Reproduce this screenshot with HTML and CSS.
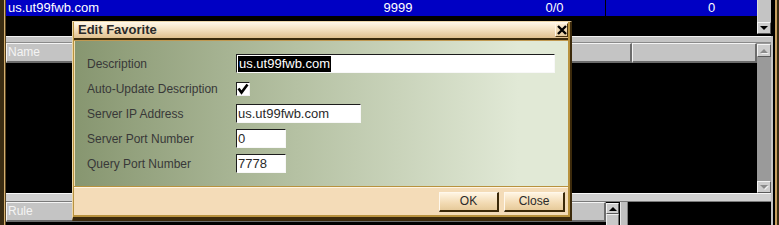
FILE: index.html
```html
<!DOCTYPE html>
<html>
<head>
<meta charset="utf-8">
<title>Edit Favorite</title>
<link rel="stylesheet" href="styles.css">
</head>
<body>
<div class="screen">
  <div class="edge-left"></div>
  <div class="main">
    <section class="pane pane-servers">
      <div class="list">
        <div class="row row-selected">
          <span class="cell c-name">us.ut99fwb.com</span>
          <span class="cell c-ping">9999</span>
          <span class="cell c-players">0/0</span>
          <span class="cell c-extra">0</span>
        </div>
      </div>
      <div class="vscroll vscroll-top">
        <div class="track"></div>
        <div class="sbtn"><span class="tri tri-down"></span></div>
      </div>
    </section>
    <div class="lower">
      <div class="splitter"></div>
      <section class="pane pane-players">
        <div class="list">
          <div class="header">
            <span class="hcell h-name">Name</span>
            <span class="hcell h-rest"></span>
          </div>
          <div class="list-body"></div>
        </div>
        <div class="vscroll vscroll-players">
          <div class="sbtn sbtn-up"><span class="tri tri-up off"></span></div>
          <div class="track dark"></div>
          <div class="sbtn"><span class="tri tri-down off"></span></div>
        </div>
      </section>
      <div class="hbar"></div>
      <section class="pane pane-rules">
        <span class="hcell h-rule">Rule</span>
        <div class="mini-scroll">
          <div class="sbtn sbtn-mini"><span class="tri tri-up"></span></div>
          <div class="mini-track"></div>
        </div>
        <div class="mini-strip"></div>
      </section>
    </div>
  </div>
  <div class="edge-right"></div>
</div>

<div class="dialog">
  <div class="titlebar">
    <span class="title">Edit Favorite</span>
    <span class="close-btn">
      <svg width="10" height="10" viewBox="0 0 10 10"><path d="M1 1 L9 9 M9 1 L1 9" stroke="#000" stroke-width="2.4" fill="none"/></svg>
    </span>
  </div>
  <div class="title-sep"></div>
  <div class="dlg-body">
    <div class="field"><span class="label">Description</span><div class="input wide"><span class="sel">us.ut99fwb.com</span></div></div>
    <div class="field"><span class="label">Auto-Update Description</span><div class="checkbox"><svg width="12" height="12" viewBox="0 0 12 12"><path d="M1.5 5.5 L4.5 9.5 L10.5 1.5" stroke="#000" stroke-width="2.6" fill="none"/></svg></div></div>
    <div class="field"><span class="label">Server IP Address</span><div class="input medium">us.ut99fwb.com</div></div>
    <div class="field"><span class="label">Server Port Number</span><div class="input short">0</div></div>
    <div class="field"><span class="label">Query Port Number</span><div class="input short">7778</div></div>
  </div>
  <div class="btnbar">
    <span class="btn btn-ok">OK</span>
    <span class="btn btn-close">Close</span>
  </div>
</div>
</body>
</html>
```

FILE: styles.css
```css
* { box-sizing: border-box; }
html, body { margin: 0; padding: 0; }
body {
  width: 779px;
  height: 225px;
  overflow: hidden;
  background: #000;
  font-family: "Liberation Sans", Arial, sans-serif;
  position: relative;
}
.screen { display: flex; width: 779px; height: 225px; }
.edge-left {
  width: 6px;
  background: linear-gradient(to right, #3a2c12 0 4px, #d4b070 4px 5px, #5a4420 5px 6px);
}
.edge-right {
  width: 6px;
  background: linear-gradient(to right, #000 0 2px, #c8a060 2px 4px, #3a2c12 4px 6px);
}
.main { width: 767px; display: flex; flex-direction: column; }

.pane { display: flex; }
.pane-servers { height: 36px; }
.list { width: 751px; display: flex; flex-direction: column; }
.row-selected {
  display: flex;
  height: 16px;
  background: #0000c4;
  color: #fff;
  font-size: 13px;
  line-height: 16px;
}
.cell { white-space: nowrap; }
.c-name { width: 286px; padding-left: 2px; }
.c-ping { width: 212px; text-align: center; }
.c-players { width: 102px; text-align: center; border-right: 1px solid #000; }
.c-extra { flex: 1; padding-left: 60px; text-align: center; }

.vscroll { width: 16px; display: flex; flex-direction: column; }
.vscroll-top { border-right: 2px solid #000; }
.vscroll-top .track { flex: 1; background: #c4c4c4; border-left: 1px solid #dcdcdc; }
.vscroll-top .sbtn { margin-bottom: 2px; }
.sbtn {
  width: 14px;
  height: 12px;
  background: #cdcdcd;
  border: 1px solid;
  border-color: #f4f4f4 #5a5a5a #5a5a5a #f4f4f4;
  display: flex;
  align-items: center;
  justify-content: center;
}
.tri { width: 0; height: 0; }
.tri-down { border-left: 4px solid transparent; border-right: 4px solid transparent; border-top: 4px solid #000; }
.tri-up { border-left: 4px solid transparent; border-right: 4px solid transparent; border-bottom: 4px solid #000; }
.tri-down.off { border-top-color: #8a8a8a; filter: drop-shadow(1px 1px 0 #f0f0f0); }
.tri-up.off { border-bottom-color: #8a8a8a; filter: drop-shadow(1px 1px 0 #f0f0f0); }

.lower {
  flex: 1;
  display: flex;
  flex-direction: column;
  border-right: 2px solid #c4c4c4;
}
.splitter {
  height: 7px;
  background: #c4c4c4;
  border-top: 1px solid #f2f2f2;
  border-bottom: 1px solid #8a8a8a;
}
.pane-players { height: 150px; }
.pane-players .list { width: 751px; }
.header { display: flex; height: 20px; }
.hcell {
  height: 20px;
  background: #c4c4c4;
  border-style: solid;
  border-width: 1px 2px 2px 1px;
  border-color: #f4f4f4 #6c6c6c #6c6c6c #f4f4f4;
  color: #f4f4f4;
  font-size: 12px;
  line-height: 17px;
  padding-left: 1px;
}
.h-name { width: 626px; }
.h-rest { flex: 1; }
.list-body { flex: 1; background: #000; }

.vscroll-players { width: 14px; background: #9a9a9a; padding-top: 1px; }
.vscroll-players .sbtn-up { height: 13px; }
.vscroll-players .track { flex: 1; }

.hbar {
  height: 9px;
  background: #d0d0d0;
  border-top: 1px solid #f8f8f8;
  border-bottom: 1px solid #7a7a7a;
}
.pane-rules { flex: 1; align-items: flex-start; }
.h-rule { width: 600px; }
.mini-scroll { width: 13px; display: flex; flex-direction: column; align-self: stretch; padding-top: 1px; }
.sbtn-mini { width: 13px; height: 11px; }
.mini-track {
  flex: 1;
  background: #c8c8c8;
  border-top: 1px solid #f0f0f0;
  border-left: 1px solid #f0f0f0;
  border-right: 1px solid #707070;
}
.mini-strip {
  width: 8px;
  margin-left: 1px;
  align-self: stretch;
  background: #c0c0c0;
  border-left: 1px solid #e8e8e8;
  border-right: 1px solid #808080;
}

/* Dialog window */
.dialog {
  position: absolute;
  left: 72px;
  top: 21px;
  width: 500px;
  height: 200px;
  display: flex;
  flex-direction: column;
  background: #b8923e;
  border-style: solid;
  border-width: 1px 2px 4px 1px;
  border-color: #ecd6a8 #3c2a0c #3c2a0c #ecd6a8;
  padding: 0 2px 2px 1px;
}
.titlebar {
  height: 16px;
  display: flex;
  align-items: center;
  justify-content: space-between;
  padding-left: 4px;
  background: linear-gradient(#fff8ea, #f6e4c6 40%, #e0c08e);
}
.title { font-size: 13px; font-weight: bold; color: #2a2a2a; line-height: 16px; }
.close-btn {
  width: 13px;
  height: 14px;
  display: flex;
  align-items: center;
  justify-content: center;
  background: linear-gradient(#fbecd2, #e6cc9e);
  border-style: solid;
  border-width: 1px 1px 1px 1px;
  border-color: #fff6e6 #4a3410 #4a3410 #fff6e6;
}
.title-sep {
  height: 3px;
  background: linear-gradient(#3a2a0c 0 2px, #c09850 2px 3px);
}
.dlg-body {
  height: 145px;
  margin-bottom: 1px;
  border-left: 1px solid #efdcae;
  padding: 10px 0 0 12px;
  background: linear-gradient(to right, #879670 0%, #b5c1a3 45%, #e1e9d6 90%, #e1e9d6 100%);
}
.field { display: flex; align-items: center; height: 25px; }
.label { width: 149px; font-size: 12px; color: #383838; white-space: nowrap; }
.input {
  height: 19px;
  background: #fff;
  border: 1px solid;
  border-color: #1c1c1c #f8f8f8 #f8f8f8 #1c1c1c;
  font-size: 13px;
  line-height: 17px;
  padding-left: 1px;
  color: #2a2a2a;
  white-space: nowrap;
}
.wide { width: 319px; }
.medium { width: 125px; }
.short { width: 50px; }
.sel {
  display: inline-block;
  background: #000;
  color: #fff;
  line-height: 16px;
  padding: 0 1px;
}
.checkbox {
  width: 14px;
  height: 14px;
  background: #fff;
  border: 1px solid;
  border-color: #1c1c1c #f0f0f0 #f0f0f0 #1c1c1c;
  display: flex;
  align-items: center;
  justify-content: center;
}
.btnbar {
  height: 28px;
  display: flex;
  justify-content: flex-end;
  align-items: flex-start;
  gap: 5px;
  padding: 4px 3px 0 0;
  background: #f4dcb8;
  border-top: 1px solid #fff4e0;
}
.btn {
  height: 20px;
  font-size: 12px;
  line-height: 17px;
  text-align: center;
  color: #2a2a2a;
  background: linear-gradient(#fff4e2, #f2dab2 60%, #e6ca9a);
  border-style: solid;
  border-width: 1px 2px 2px 1px;
  border-color: #fff8ec #3a2808 #3a2808 #fff8ec;
}
.btn-ok { width: 60px; }
.btn-close { width: 61px; }
```
